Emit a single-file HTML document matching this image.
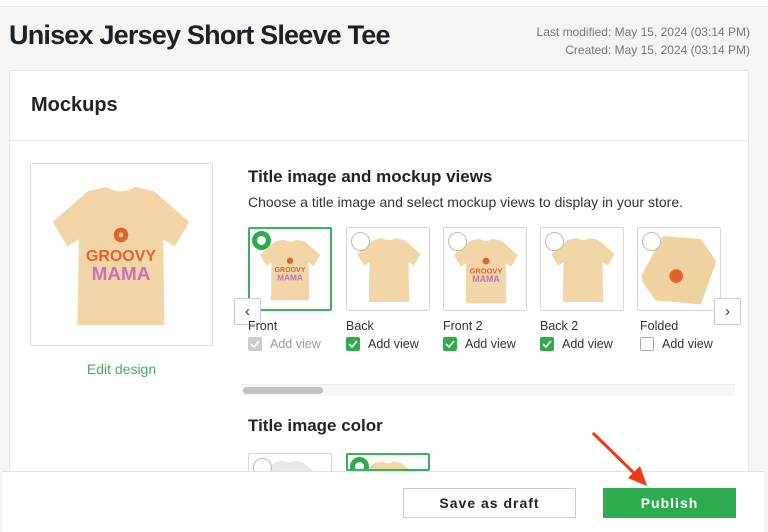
<!DOCTYPE html>
<html><head><style>
*{box-sizing:border-box;margin:0;padding:0}
html,body{width:768px;height:532px;overflow:hidden}
body{background:#f5f5f5;font-family:"Liberation Sans",sans-serif;color:#1d2327;position:relative}
.abs{position:absolute}
.topline{left:0;top:0;width:768px;height:7px;background:#fff;border-bottom:1px solid #e2e2e2}
h1{position:absolute;left:9px;top:20px;font-size:27px;font-weight:bold;letter-spacing:-0.8px;color:#1b2126}
.meta{right:18px;top:23px;font-size:12px;color:#777;text-align:right;line-height:18px}
.card{left:9px;top:70px;width:740px;height:420px;background:#fff;border:1px solid #e8e8e8}
.hdiv{left:10px;top:140px;width:739px;height:1px;background:#e8e8e8}
.mock{left:31px;top:94px;font-size:20px;font-weight:bold}
.main{left:30px;top:163px;width:183px;height:183px;border:1px solid #ddd;border-radius:2px;background:#fff}
.edit{left:30px;top:361px;width:183px;text-align:center;color:#3fb15c;font-size:14px}
.t1{left:248px;top:167px;font-size:17px;font-weight:bold}
.t2{left:248px;top:194px;font-size:14px;color:#333}
.th{top:227px;width:84px;height:84px;border:1px solid #d6d6d6;border-radius:2px;background:#fff;overflow:hidden}
.th.sel{border:2px solid #3bb05a}
.sw{height:18px;border-bottom:none}
.rad{position:absolute;left:4px;top:4px;width:19px;height:19px;border-radius:50%;border:1.5px solid #bbb;background:#fff}
.sel .rad{border:5px solid #2eaa4f;left:2px;top:2px}
.lbl{top:319px;font-size:12.5px;color:#333}
.cb{top:337px;font-size:12.5px;color:#333;display:flex;align-items:center}
.box{width:14px;height:14px;border-radius:2px;background:#2eaa4f;margin-right:8px;display:flex;align-items:center;justify-content:center}
.box.dis{background:#ccc}.box.off{background:#fff;border:1.5px solid #aaa}
.arr{top:298px;width:27px;height:27px;background:#fff;border:1px solid #ccc;border-radius:2px;font-size:15px;text-align:center;line-height:25px;color:#333}
.track{left:241px;top:384px;width:494px;height:12px;background:#f7f7f7;border-top:1px solid #eee}
.thumb{left:243px;top:387px;width:80px;height:7px;background:#c2c2c2;border-radius:4px}
.t3{left:248px;top:416px;font-size:17px;font-weight:bold}
.foot{left:2px;top:471px;width:762px;height:61px;background:#fff;border-top:1px solid #e2e2e2;z-index:5}
.btn{top:488px;height:30px;font-size:14px;font-weight:bold;letter-spacing:1px;text-align:center;line-height:28px;z-index:6}
.draft{left:403px;width:173px;border:1px solid #ccc;background:#fff;color:#222}
.pub{left:603px;width:133px;background:#2eaa4f;color:#fff;border:1px solid #2eaa4f}
</style></head><body>
<svg width="0" height="0" style="position:absolute"><defs>
<path id="shirt" d="M27 3 L40 0 Q50 6 60 0 L73 3 L97 24 L87 41 L79 36 L80 95 L20 95 L21 36 L13 41 L3 24 Z" fill="#f2d6a8"/>
</defs></svg>
<div class="abs topline"></div>
<h1>Unisex Jersey Short Sleeve Tee</h1>
<div class="abs meta">Last modified: May 15, 2024 (03:14 PM)<br>Created: May 15, 2024 (03:14 PM)</div>
<div class="abs card"></div>
<div class="abs hdiv"></div>
<div class="abs mock">Mockups</div>
<div class="abs main">
<svg class="abs" style="left:17px;top:23px" width="146" height="138" viewBox="0 0 100 95"><use href="#shirt"/>
<circle cx="50" cy="33" r="5" fill="#e8612c"/><circle cx="50" cy="33" r="1.6" fill="#f2d6a8"/>
<text x="50" y="51" font-size="11" font-weight="bold" fill="#e8612c" text-anchor="middle" font-family="Liberation Sans">GROOVY</text>
<text x="50" y="64" font-size="13" font-weight="bold" fill="#c970b8" text-anchor="middle" font-family="Liberation Sans">MAMA</text></svg>
</div>
<div class="abs edit">Edit design</div>
<div class="abs t1">Title image and mockup views</div>
<div class="abs t2">Choose a title image and select mockup views to display in your store.</div>

<div class="abs th sel" style="left:248px"><svg class="abs" style="left:8px;top:10px" width="64" height="62" viewBox="0 0 100 95"><use href="#shirt"/><circle cx="50" cy="33" r="5" fill="#e8612c"/><text x="50" y="51" font-size="11" font-weight="bold" fill="#e8612c" text-anchor="middle">GROOVY</text><text x="50" y="64" font-size="13" font-weight="bold" fill="#c970b8" text-anchor="middle">MAMA</text></svg><div class="rad"></div></div>
<div class="abs th" style="left:346px"><svg class="abs" style="left:8px;top:10px" width="68" height="64" viewBox="0 0 100 95"><use href="#shirt"/></svg><div class="rad"></div></div>
<div class="abs th" style="left:443px"><svg class="abs" style="left:8px;top:10px" width="68" height="66" viewBox="0 0 100 95"><use href="#shirt"/><circle cx="50" cy="33" r="5" fill="#e8612c"/><text x="50" y="51" font-size="11" font-weight="bold" fill="#e8612c" text-anchor="middle">GROOVY</text><text x="50" y="64" font-size="13" font-weight="bold" fill="#c970b8" text-anchor="middle">MAMA</text></svg><div class="rad"></div></div>
<div class="abs th" style="left:540px"><svg class="abs" style="left:8px;top:10px" width="68" height="64" viewBox="0 0 100 95"><use href="#shirt"/></svg><div class="rad"></div></div>
<div class="abs th" style="left:637px"><svg class="abs" style="left:4px;top:4px" width="76" height="76" viewBox="0 0 100 100"><path d="M20 10 L70 5 L95 30 L85 90 L25 95 L0 70 Z" fill="#f0d2a0" transform="rotate(10 50 50)"/><circle cx="45" cy="58" r="9" fill="#e8612c"/></svg><div class="rad"></div></div>

<div class="abs arr" style="left:234px">&#8249;</div>
<div class="abs arr" style="left:714px">&#8250;</div>

<div class="abs lbl" style="left:248px">Front</div>
<div class="abs lbl" style="left:346px">Back</div>
<div class="abs lbl" style="left:443px">Front 2</div>
<div class="abs lbl" style="left:540px">Back 2</div>
<div class="abs lbl" style="left:640px">Folded</div>
<div class="abs cb" style="left:248px;color:#999"><span class="box dis"><svg width="10" height="8"><path d="M1 4 L4 7 L9 1" stroke="#fff" stroke-width="1.6" fill="none"/></svg></span>Add view</div>
<div class="abs cb" style="left:346px"><span class="box"><svg width="10" height="8"><path d="M1 4 L4 7 L9 1" stroke="#fff" stroke-width="1.6" fill="none"/></svg></span>Add view</div>
<div class="abs cb" style="left:443px"><span class="box"><svg width="10" height="8"><path d="M1 4 L4 7 L9 1" stroke="#fff" stroke-width="1.6" fill="none"/></svg></span>Add view</div>
<div class="abs cb" style="left:540px"><span class="box"><svg width="10" height="8"><path d="M1 4 L4 7 L9 1" stroke="#fff" stroke-width="1.6" fill="none"/></svg></span>Add view</div>
<div class="abs cb" style="left:640px"><span class="box off"></span>Add view</div>

<div class="abs track"></div><div class="abs thumb"></div>
<div class="abs t3">Title image color</div>
<div class="abs th sw" style="left:248px;top:453px"><svg class="abs" style="left:10px;top:6px" width="60" height="58" viewBox="0 0 100 95"><path d="M27 3 L40 0 Q50 6 60 0 L73 3 L97 24 L87 41 L79 36 L80 95 L20 95 L21 36 L13 41 L3 24 Z" fill="#e8e8e8"/></svg><div class="rad"></div></div>
<div class="abs th sel sw" style="left:346px;top:453px"><svg class="abs" style="left:10px;top:6px" width="60" height="58" viewBox="0 0 100 95"><use href="#shirt"/></svg><div class="rad"></div></div>

<div class="abs foot"></div>
<div class="abs btn draft">Save as draft</div>
<div class="abs btn pub">Publish</div>
<svg class="abs" style="left:585px;top:428px;z-index:7" width="70" height="65"><line x1="8" y1="5" x2="52" y2="48" stroke="#f03a17" stroke-width="3"/><polygon points="62,58 43,50 55,38" fill="#f03a17"/></svg>
</body></html>
